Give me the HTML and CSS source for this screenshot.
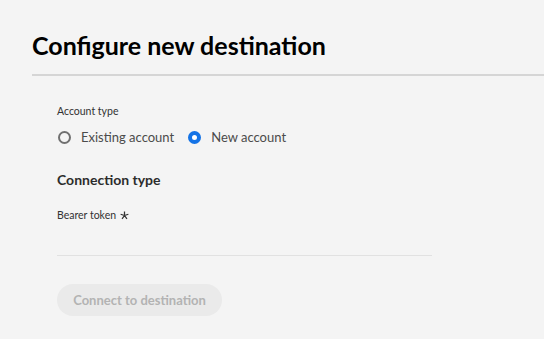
FILE: index.html
```html
<!DOCTYPE html>
<html lang="en">

<head>
  <meta charset="UTF-8">
  <meta name="viewport" content="width=device-width, initial-scale=1.0">
  <title>Configure new destination</title>
  <link rel="stylesheet" href="styles.css">
</head>

<body>
  <div class="header">
    <h1>Configure new destination</h1>
  </div>

  <div class="form">
    <div class="field-label">Account type</div>
    <div class="radio-group">
      <label class="radio">
        <span class="radio-circle"></span>
        <span class="radio-text">Existing account</span>
      </label>
      <label class="radio checked">
        <span class="radio-circle"></span>
        <span class="radio-text">New account</span>
      </label>
    </div>

    <h2 class="section-title">Connection type</h2>

    <div class="field-label">
      Bearer token
      <svg class="required" width="9" height="9" viewBox="0 0 10 10">
        <path d="M5 0.5 L5 5 M5 5 L9.3 3.6 M5 5 L7.7 8.7 M5 5 L2.3 8.7 M5 5 L0.7 3.6" stroke="#323232" stroke-width="1.4" fill="none"/>
      </svg>
    </div>
    <div class="text-input"></div>

    <button class="connect-btn" disabled>Connect to destination</button>
  </div>
</body>

</html>
```

FILE: styles.css
```css
body {
  margin: 0;
  background-color: #f4f4f4;
  font-family: Lato, "Open Sans", sans-serif;
  color: #2c2c2c;
}

.header {
  margin-left: 32px;
  padding-top: 30px;
  border-bottom: 2px solid #d5d5d5;
}

h1 {
  margin: 0;
  padding-bottom: 13px;
  font-size: 25px;
  line-height: 31px;
  font-weight: 700;
  color: #000;
}

.form {
  padding-left: 57px;
  padding-top: 28px;
}

.field-label {
  font-size: 10.5px;
  line-height: 14px;
  color: #323232;
}

.required {
  margin-left: 1px;
  vertical-align: -1px;
}

.radio-group {
  display: flex;
  gap: 13px;
  margin-top: 8px;
}

.radio {
  display: flex;
  align-items: center;
  gap: 10px;
  font-size: 13px;
  line-height: 22px;
  color: #4b4b4b;
}

.radio-circle {
  width: 9px;
  height: 9px;
  border: 2px solid #707070;
  border-radius: 50%;
  margin-left: 1px;
}

.radio.checked .radio-circle {
  width: 5px;
  height: 5px;
  border: 4px solid #1473e6;
  background-color: #fff;
}

.section-title {
  margin: 22px 0 0;
  font-size: 14px;
  line-height: 20px;
  font-weight: 700;
}

.section-title + .field-label {
  margin-top: 18px;
}

.text-input {
  width: 375px;
  height: 33px;
  border-bottom: 1px solid #e1e1e1;
}

.connect-btn {
  margin-top: 28px;
  height: 32px;
  width: 165px;
  border: none;
  border-radius: 16px;
  background-color: #eaeaea;
  color: #b3b3b3;
  font-family: inherit;
  font-size: 13px;
  font-weight: 700;
  padding: 0;
}
```
